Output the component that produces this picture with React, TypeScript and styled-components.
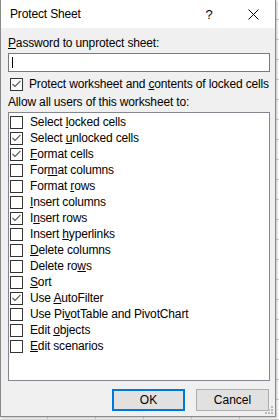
import React from 'react';
import styled, { createGlobalStyle } from 'styled-components';

const Global = createGlobalStyle`
    html, body {
        margin: 0;
        padding: 0;
    }

    body {
        width: 279px;
        height: 420px;
        overflow: hidden;
        background-color: #ffffff;
        background-image:
            repeating-linear-gradient(to bottom, transparent 0 19px, #d4d4d4 19px 20px),
            repeating-linear-gradient(to right, transparent 0 47px, #d4d4d4 47px 48px);
        font-family: "Segoe UI", "Liberation Sans", Arial, sans-serif;
        font-size: 12px;
        letter-spacing: -0.15px;
        color: #000;
    }
`;

const Dialog = styled.div`
    position: relative;
    width: 274px;
    height: 416px;
    display: flex;
    flex-direction: column;
    background: #f0f0f0;
    border: 1px solid #8a8a8a;
    border-top: none;
    box-shadow: 1px 1px 2px rgba(0, 0, 0, 0.25);
`;

const TitleBar = styled.div`
    height: 28px;
    display: flex;
    align-items: center;
    background: #ffffff;
    padding-left: 9px;
`;

const Title = styled.span`
    flex: 1;
    font-size: 12px;
`;

const TitleButton = styled.span`
    width: 44px;
    display: flex;
    align-items: center;
    justify-content: center;
    font-size: 13px;
`;

const Body = styled.div`
    flex: 1;
    display: flex;
    flex-direction: column;
    padding: 7px 5px 0 7px;
`;

const Label = styled.div<{ $gap?: number }>`
    line-height: 16px;
    height: 16px;
    margin-top: ${p => p.$gap ?? 0}px;
    white-space: nowrap;
`;

const Input = styled.div`
    margin-top: 2px;
    height: 17px;
    border: 1px solid #7a7a7a;
    background: #ffffff;
    display: flex;
    align-items: center;
    padding-left: 3px;
`;

const Caret = styled.span`
    width: 1px;
    height: 11px;
    background: #000;
`;

const Row = styled.div<{ $indent: number; $gap: number }>`
    height: 16px;
    display: flex;
    align-items: center;
    gap: ${p => p.$gap}px;
    padding-left: ${p => p.$indent}px;
    white-space: nowrap;
`;

const Box = styled.span`
    width: 11px;
    height: 11px;
    border: 1px solid #333333;
    background: #ffffff;
    display: flex;
    align-items: center;
    justify-content: center;
    flex-shrink: 0;
`;

const Text = styled.span`
    line-height: 16px;
`;

const List = styled.div`
    margin-top: 2px;
    height: 266px;
    border: 1px solid #828790;
    background: #ffffff;
    padding-top: 1px;
`;

const Buttons = styled.div`
    margin-top: 8px;
    display: flex;
    justify-content: flex-end;
    gap: 11px;
    padding-right: 1px;
`;

const Button = styled.button<{ $default?: boolean }>`
    width: 73px;
    height: 22px;
    padding: 0;
    font-family: inherit;
    font-size: 12px;
    color: #000;
    background: #e1e1e1;
    border: ${p => (p.$default ? '2px solid #0078d7' : '1px solid #adadad')};
`;

const Grip = styled.svg`
    position: absolute;
    right: 1px;
    bottom: 1px;
`;

function Check({ on }: { on?: boolean }) {
    return (
        <Box>
            {on && (
                <svg width="9" height="8" viewBox="0 0 9 8">
                    <polyline points="0.5,4 3,6.5 8.5,0.8" fill="none" stroke="#555" strokeWidth="1.1" />
                </svg>
            )}
        </Box>
    );
}

const items: [React.ReactNode, boolean][] = [
    [<>Select <u>l</u>ocked cells</>, false],
    [<>Select <u>u</u>nlocked cells</>, true],
    [<><u>F</u>ormat cells</>, true],
    [<>For<u>m</u>at columns</>, false],
    [<>Format <u>r</u>ows</>, false],
    [<><u>I</u>nsert columns</>, false],
    [<>I<u>n</u>sert rows</>, true],
    [<>Insert <u>h</u>yperlinks</>, false],
    [<><u>D</u>elete columns</>, false],
    [<>Delete ro<u>w</u>s</>, false],
    [<><u>S</u>ort</>, false],
    [<>Use <u>A</u>utoFilter</>, true],
    [<>Use Pi<u>v</u>otTable and PivotChart</>, false],
    [<>Edit <u>o</u>bjects</>, false],
    [<><u>E</u>dit scenarios</>, false],
];

export default function App() {
    return (
        <>
            <Global />
            <Dialog>
                <TitleBar>
                    <Title>Protect Sheet</Title>
                    <TitleButton>?</TitleButton>
                    <TitleButton>
                        <svg width="11" height="11" viewBox="0 0 11 11">
                            <path d="M0.5 0.5 L10.5 10.5 M10.5 0.5 L0.5 10.5" stroke="#000" strokeWidth="1" />
                        </svg>
                    </TitleButton>
                </TitleBar>
                <Body>
                    <Label><u>P</u>assword to unprotect sheet:</Label>
                    <Input><Caret /></Input>
                    <Row $indent={2} $gap={6} style={{ marginTop: 4 }}>
                        <Check on />
                        <Text>Protect worksheet and <u>c</u>ontents of locked cells</Text>
                    </Row>
                    <Label $gap={2}>Allow all users of this worksheet to:</Label>
                    <List>
                        {items.map(([text, on], i) => (
                            <Row key={i} $indent={1} $gap={7}>
                                <Check on={on} />
                                <Text>{text}</Text>
                            </Row>
                        ))}
                    </List>
                    <Buttons>
                        <Button $default>OK</Button>
                        <Button>Cancel</Button>
                    </Buttons>
                </Body>
                <Grip width="9" height="9" viewBox="0 0 9 9">
                    <g fill="#b8b8b8">
                        <rect x="6" y="0" width="2" height="2" />
                        <rect x="3" y="3" width="2" height="2" />
                        <rect x="6" y="3" width="2" height="2" />
                        <rect x="0" y="6" width="2" height="2" />
                        <rect x="3" y="6" width="2" height="2" />
                        <rect x="6" y="6" width="2" height="2" />
                    </g>
                </Grip>
            </Dialog>
        </>
    );
}
